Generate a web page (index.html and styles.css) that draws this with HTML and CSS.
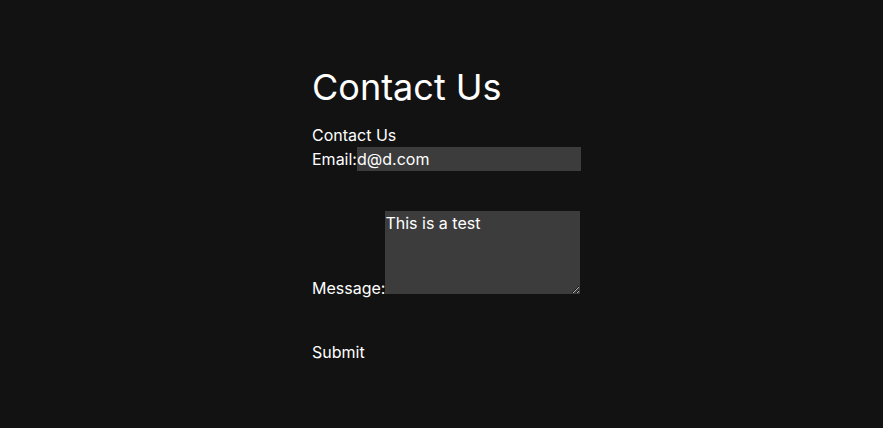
FILE: index.html
```html
<!DOCTYPE html>
<html lang="en">

<head>
  <meta name="viewport" content="width=device-width, initial-scale=1.0">
  <meta charset="utf-8">
  <title>Contact Us</title>
  <link rel="stylesheet" href="styles.css">
</head>

<body>
  <main class="page">
    <section class="contact">
      <h1 class="contact-heading">Contact Us</h1>
      <form class="contact-form">
        <p class="form-title">Contact Us</p>
        <div class="field field-email">
          <label for="email">Email:</label><input id="email" type="email" value="d@d.com">
        </div>
        <div class="field field-message">
          <label for="message">Message:</label><textarea id="message">This is a test</textarea>
        </div>
        <div class="actions">
          <button type="submit" class="submit">Submit</button>
        </div>
      </form>
    </section>
  </main>
</body>

</html>
```

FILE: styles.css
```css
body, h1, p, form {
  margin: 0;
  padding: 0;
}

body {
  background: #121212;
  color: #fff;
  font: 16px Inter, "Noto Sans", sans-serif;
}

.page {
  display: flex;
  justify-content: center;
  padding: 65px 0 0 9px;
}

.contact {
  width: 268px;
}

.contact-heading {
  font-size: 36px;
  font-weight: 400;
  margin-bottom: 16px;
}

.form-title {
  margin-bottom: 2px;
}

.field {
  white-space: nowrap;
}

.field input,
.field textarea {
  font: inherit;
  color: #fff;
  background: #3c3c3c;
  border: 0;
  outline: none;
  margin: 0;
}

.field input {
  width: 224px;
  height: 24px;
  padding: 0;
}

.field-message {
  margin-top: 40px;
}

.field textarea {
  width: 195px;
  height: 83px;
  padding: 2px 0;
  box-sizing: border-box;
  vertical-align: baseline;
}

.actions {
  margin-top: 44px;
}

.submit {
  font: inherit;
  color: #fff;
  background: none;
  border: 0;
  padding: 0;
  cursor: pointer;
}
```
